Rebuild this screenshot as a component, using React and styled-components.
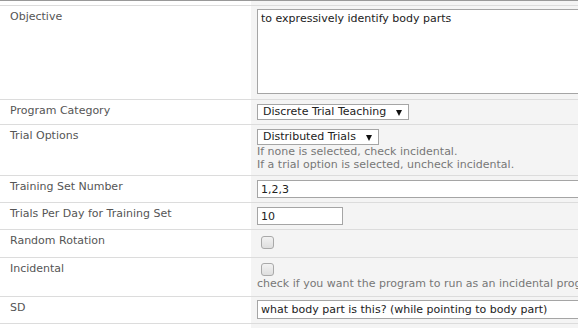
import React from 'react';
import styled, { createGlobalStyle } from 'styled-components';

const GlobalStyle = createGlobalStyle`
  html, body {
    margin: 0;
    padding: 0;
    background: #fff;
    overflow: hidden;
  }
  body {
    font-family: "DejaVu Sans", Verdana, sans-serif;
  }
`;

const Table = styled.div`
  width: 760px;
  border-top: 1px solid #999;
`;

const Row = styled.div`
  display: grid;
  grid-template-columns: 251px 1fr;
  border-top: ${(p) => (p.$first ? 'none' : '1px solid #dcdcdc')};
  min-height: ${(p) => p.$h || 0}px;
`;

const Label = styled.div`
  padding: 4px 10px 0;
  font-size: 11px;
  line-height: 14px;
  color: #555;
  background: #fff;
`;

const Field = styled.div`
  background: #f4f4f4;
  padding: ${(p) => p.$pad || '4px 6px'};
  line-height: 13px;
`;

const TextArea = styled.textarea`
  display: block;
  box-sizing: border-box;
  width: 420px;
  height: 85px;
  margin: 0;
  padding: 2px 3px;
  border: 1px solid #a5a5a5;
  background: #fff;
  font-family: "DejaVu Sans", Verdana, sans-serif;
  font-size: 11px;
  line-height: 14px;
  color: #222;
  resize: none;
  outline: none;
`;

const TextInput = styled.input`
  display: block;
  box-sizing: border-box;
  width: ${(p) => p.$w}px;
  height: ${(p) => p.$h || 18}px;
  margin: 0;
  padding: 0 3px;
  border: 1px solid #a5a5a5;
  background: #fff;
  font-family: "DejaVu Sans", Verdana, sans-serif;
  font-size: 11px;
  color: #222;
  outline: none;
`;

const Select = styled.div`
  display: flex;
  align-items: center;
  width: fit-content;
  box-sizing: border-box;
  height: 16px;
  padding: 0 6px 0 5px;
  gap: 10px;
  border: 1px solid #a5a5a5;
  background: #fff;
  font-size: 11px;
  line-height: 14px;
  color: #222;
`;

const Arrow = styled.span`
  width: 0;
  height: 0;
  border-left: 3px solid transparent;
  border-right: 3px solid transparent;
  border-top: 6px solid #111;
  margin-top: 1px;
`;

const Help = styled.div`
  font-size: 11px;
  line-height: ${(p) => p.$lh || 13}px;
  color: #777;
  white-space: nowrap;
`;

const Check = styled.input.attrs({ type: 'checkbox' })`
  appearance: none;
  display: block;
  box-sizing: border-box;
  width: 13px;
  height: 13px;
  margin: ${(p) => p.$m || '0 0 0 4px'};
  border: 1px solid #a9a9a9;
  border-radius: 3px;
  background: linear-gradient(#f2f2f2, #dedede);
`;

const Spacer = styled.div`
  background: ${(p) => (p.$grey ? '#f4f4f4' : '#fff')};
`;

export default function App() {
  return (
    <>
      <GlobalStyle />
      <Table>
        <Row $first $h={4}>
          <Spacer />
          <Spacer $grey />
        </Row>
        <Row>
          <Label>Objective</Label>
          <Field $pad="3px 6px 5px">
            <TextArea readOnly defaultValue="to expressively identify body parts" />
          </Field>
        </Row>
        <Row>
          <Label>Program Category</Label>
          <Field>
            <Select>
              Discrete Trial Teaching
              <Arrow />
            </Select>
          </Field>
        </Row>
        <Row>
          <Label>Trial Options</Label>
          <Field>
            <Select>
              Distributed Trials
              <Arrow />
            </Select>
            <Help>If none is selected, check incidental.</Help>
            <Help>If a trial option is selected, uncheck incidental.</Help>
          </Field>
        </Row>
        <Row>
          <Label>Training Set Number</Label>
          <Field>
            <TextInput readOnly $w={420} defaultValue="1,2,3" />
          </Field>
        </Row>
        <Row>
          <Label>Trials Per Day for Training Set</Label>
          <Field>
            <TextInput readOnly $w={86} defaultValue="10" />
          </Field>
        </Row>
        <Row>
          <Label>Random Rotation</Label>
          <Field $pad="6px 6px 8px">
            <Check />
          </Field>
        </Row>
        <Row>
          <Label>Incidental</Label>
          <Field $pad="5px 6px 5px">
            <Check $m="0 0 1px 4px" />
            <Help $lh={14}>
              check if you want the program to run as an incidental program
            </Help>
          </Field>
        </Row>
        <Row>
          <Label>SD</Label>
          <Field $pad="3px 6px 4px">
            <TextInput
              readOnly
              $w={420}
              $h={19}
              defaultValue="what body part is this? (while pointing to body part)"
            />
          </Field>
        </Row>
        <Row $h={8}>
          <Spacer />
          <Spacer $grey />
        </Row>
      </Table>
    </>
  );
}
